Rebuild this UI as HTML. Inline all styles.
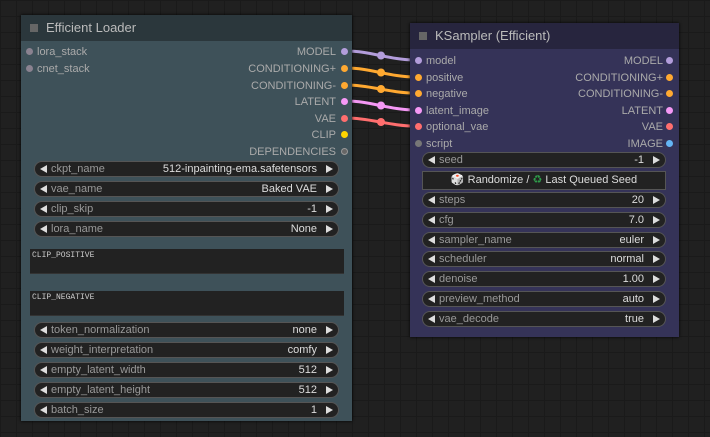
<!DOCTYPE html>
<html><head><style>
*{margin:0;padding:0;box-sizing:border-box}
body{width:710px;height:437px;overflow:hidden;background:#202020;font-family:"Liberation Sans",sans-serif;font-size:11px;position:relative;
background-image:linear-gradient(#1a1a1a 1px,transparent 1px),linear-gradient(90deg,#1a1a1a 1px,transparent 1px);background-size:16px 16px;}
.node{position:absolute}
.title{position:absolute;left:0;right:0;top:0;color:#bbb;font-size:13px}
.title .sq{position:absolute;left:9px;width:8px;height:8px;background:#666}
.lbl{position:absolute;color:#aaa;white-space:nowrap;line-height:12px;margin-top:1px}
.dot{position:absolute;width:7px;height:7px;border-radius:50%}
.w{position:absolute;height:16px;background:#222;border:1px solid #555;border-radius:8px;color:#999;line-height:14px}
.w .l{position:absolute;left:16px}
.w .v{position:absolute;right:21px;color:#ddd}
.w:before{content:"";position:absolute;left:5px;top:3px;border-right:7px solid #ddd;border-top:4px solid transparent;border-bottom:4px solid transparent}
.w:after{content:"";position:absolute;right:5px;top:3px;border-left:7px solid #ddd;border-top:4px solid transparent;border-bottom:4px solid transparent}
.ta{position:absolute;background:#222;border-bottom:1px solid #333;color:#ccc;font-family:"Liberation Mono",monospace;font-size:8px;padding:2px 2px}
</style></head><body>

<svg style="position:absolute;left:0;top:0" width="710" height="437">
<g stroke-width="3" fill="none">
<path d="M347 51 C370 51 390 60 415 60" stroke="#b39ddb"/>
<path d="M347 68 C370 68 390 77 415 77" stroke="#ffa931"/>
<path d="M347 85 C370 85 390 93 415 93" stroke="#ffa931"/>
<path d="M347 101 C370 101 390 110 415 110" stroke="#f598f5"/>
<path d="M347 118 C370 118 390 126 415 126" stroke="#ff6e6e"/>
</g>
<circle cx="381" cy="55.5" r="4" fill="#b39ddb"/>
<circle cx="381" cy="72.5" r="4" fill="#ffa931"/>
<circle cx="381" cy="89" r="4" fill="#ffa931"/>
<circle cx="381" cy="105.5" r="4" fill="#f598f5"/>
<circle cx="381" cy="122" r="4" fill="#ff6e6e"/>
</svg>

<!-- Left node -->
<div class="node" style="left:21px;top:15px;width:331px;height:406px;background:#3e5159;box-shadow:0 0 3px #000">
<div class="title" style="height:26px;background:#2b373c;line-height:25px"><span class="sq" style="top:9px"></span><span style="position:absolute;left:25px">Efficient Loader</span></div>
<span class="dot" style="left:5px;top:33px;background:#8a8290"></span><span class="lbl" style="left:16px;top:30px">lora_stack</span>
<span class="dot" style="left:5px;top:50px;background:#8a8290"></span><span class="lbl" style="left:16px;top:47px">cnet_stack</span>
<span class="lbl" style="right:16px;top:30px">MODEL</span><span class="dot" style="right:4px;top:33px;background:#b39ddb"></span>
<span class="lbl" style="right:16px;top:47px">CONDITIONING+</span><span class="dot" style="right:4px;top:50px;background:#ffa931"></span>
<span class="lbl" style="right:16px;top:64px">CONDITIONING-</span><span class="dot" style="right:4px;top:67px;background:#ffa931"></span>
<span class="lbl" style="right:16px;top:80px">LATENT</span><span class="dot" style="right:4px;top:83px;background:#f598f5"></span>
<span class="lbl" style="right:16px;top:97px">VAE</span><span class="dot" style="right:4px;top:100px;background:#ff6e6e"></span>
<span class="lbl" style="right:16px;top:113px">CLIP</span><span class="dot" style="right:4px;top:116px;background:#ffd500"></span>
<span class="lbl" style="right:16px;top:130px">DEPENDENCIES</span><span class="dot" style="right:4px;top:133px;background:#666;border:1px solid #999"></span>
<div class="w" style="left:13px;top:146px;width:305px"><span class="l">ckpt_name</span><span class="v">512-inpainting-ema.safetensors</span></div>
<div class="w" style="left:13px;top:166px;width:305px"><span class="l">vae_name</span><span class="v">Baked VAE</span></div>
<div class="w" style="left:13px;top:186px;width:305px"><span class="l">clip_skip</span><span class="v">-1</span></div>
<div class="w" style="left:13px;top:206px;width:305px"><span class="l">lora_name</span><span class="v">None</span></div>
<div class="ta" style="left:9px;top:234px;width:314px;height:25px">CLIP_POSITIVE</div>
<div class="ta" style="left:9px;top:276px;width:314px;height:25px">CLIP_NEGATIVE</div>
<div class="w" style="left:13px;top:307px;width:305px"><span class="l">token_normalization</span><span class="v">none</span></div>
<div class="w" style="left:13px;top:327px;width:305px"><span class="l">weight_interpretation</span><span class="v">comfy</span></div>
<div class="w" style="left:13px;top:347px;width:305px"><span class="l">empty_latent_width</span><span class="v">512</span></div>
<div class="w" style="left:13px;top:367px;width:305px"><span class="l">empty_latent_height</span><span class="v">512</span></div>
<div class="w" style="left:13px;top:387px;width:305px"><span class="l">batch_size</span><span class="v">1</span></div>
</div>

<!-- Right node -->
<div class="node" style="left:410px;top:23px;width:269px;height:314px;background:#353358;box-shadow:0 0 3px #000">
<div class="title" style="height:26px;background:#27253e;line-height:25px"><span class="sq" style="top:9px"></span><span style="position:absolute;left:25px">KSampler (Efficient)</span></div>
<span class="dot" style="left:5px;top:34px;background:#b39ddb"></span><span class="lbl" style="left:16px;top:31px">model</span>
<span class="dot" style="left:5px;top:51px;background:#ffa931"></span><span class="lbl" style="left:16px;top:48px">positive</span>
<span class="dot" style="left:5px;top:67px;background:#ffa931"></span><span class="lbl" style="left:16px;top:64px">negative</span>
<span class="dot" style="left:5px;top:84px;background:#f598f5"></span><span class="lbl" style="left:16px;top:81px">latent_image</span>
<span class="dot" style="left:5px;top:100px;background:#ff6e6e"></span><span class="lbl" style="left:16px;top:97px">optional_vae</span>
<span class="dot" style="left:5px;top:117px;background:#777"></span><span class="lbl" style="left:16px;top:114px">script</span>
<span class="lbl" style="right:16px;top:31px">MODEL</span><span class="dot" style="right:6px;top:34px;background:#b39ddb"></span>
<span class="lbl" style="right:16px;top:48px">CONDITIONING+</span><span class="dot" style="right:6px;top:51px;background:#ffa931"></span>
<span class="lbl" style="right:16px;top:64px">CONDITIONING-</span><span class="dot" style="right:6px;top:67px;background:#ffa931"></span>
<span class="lbl" style="right:16px;top:81px">LATENT</span><span class="dot" style="right:6px;top:84px;background:#f598f5"></span>
<span class="lbl" style="right:16px;top:97px">VAE</span><span class="dot" style="right:6px;top:100px;background:#ff6e6e"></span>
<span class="lbl" style="right:16px;top:114px">IMAGE</span><span class="dot" style="right:6px;top:117px;background:#64b5f6"></span>
<div class="w" style="left:12px;top:129px;width:244px"><span class="l">seed</span><span class="v">-1</span></div>
<div style="position:absolute;left:12px;top:148px;width:244px;height:19px;background:#222;border:1px solid #555;color:#ddd;text-align:center;line-height:17px">🎲 Randomize / <span style="color:#2e9d4a">♻</span> Last Queued Seed</div>
<div class="w" style="left:12px;top:169px;width:244px"><span class="l">steps</span><span class="v">20</span></div>
<div class="w" style="left:12px;top:189px;width:244px"><span class="l">cfg</span><span class="v">7.0</span></div>
<div class="w" style="left:12px;top:209px;width:244px"><span class="l">sampler_name</span><span class="v">euler</span></div>
<div class="w" style="left:12px;top:228px;width:244px"><span class="l">scheduler</span><span class="v">normal</span></div>
<div class="w" style="left:12px;top:248px;width:244px"><span class="l">denoise</span><span class="v">1.00</span></div>
<div class="w" style="left:12px;top:268px;width:244px"><span class="l">preview_method</span><span class="v">auto</span></div>
<div class="w" style="left:12px;top:288px;width:244px"><span class="l">vae_decode</span><span class="v">true</span></div>
</div>
</body></html>
